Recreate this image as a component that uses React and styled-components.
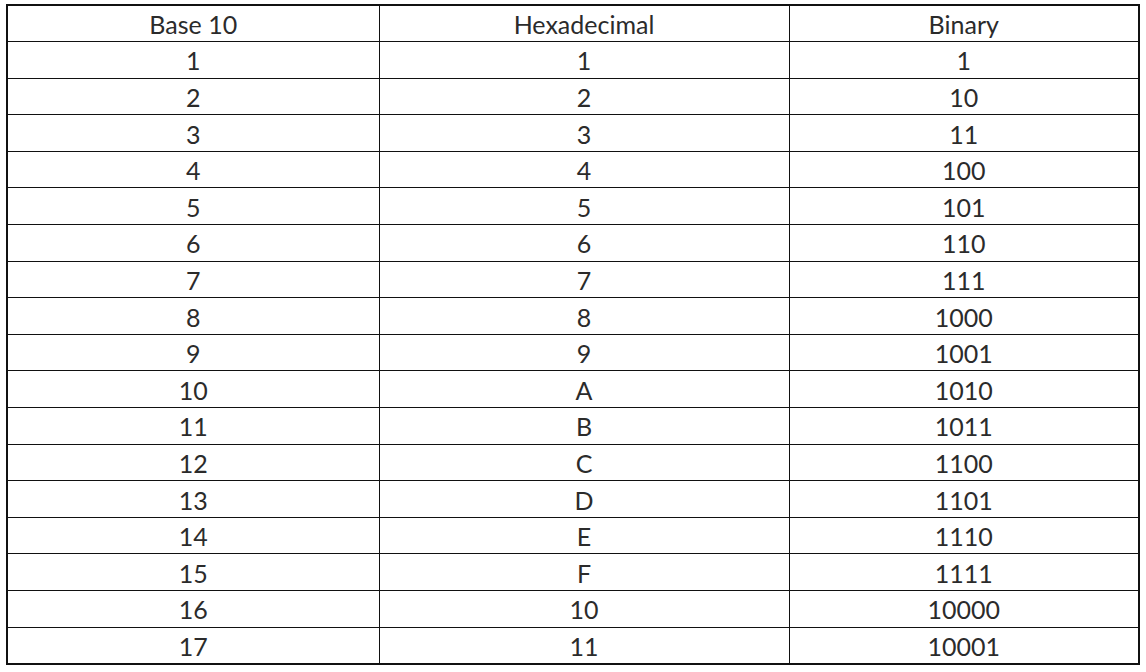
import React from 'react'
import styled, { createGlobalStyle } from 'styled-components';

const GlobalStyle = createGlobalStyle`
  html, body {
    margin: 0;
    padding: 0;
    background: #fff;
  }
  body {
    font-family: Lato, "Open Sans", sans-serif;
  }
`;

const rows = [
  [1, '1', '1'],
  [2, '2', '10'],
  [3, '3', '11'],
  [4, '4', '100'],
  [5, '5', '101'],
  [6, '6', '110'],
  [7, '7', '111'],
  [8, '8', '1000'],
  [9, '9', '1001'],
  [10, 'A', '1010'],
  [11, 'B', '1011'],
  [12, 'C', '1100'],
  [13, 'D', '1101'],
  [14, 'E', '1110'],
  [15, 'F', '1111'],
  [16, '10', '10000'],
  [17, '11', '10001'],
];

const App = () => {
  return (
    <Page>
      <GlobalStyle />
      <Table>
        <colgroup>
          <col style={{ width: 372 }} />
          <col style={{ width: 410 }} />
          <col style={{ width: 350 }} />
        </colgroup>
        <thead>
          <Row>
            <Cell as="th">Base 10</Cell>
            <Cell as="th">Hexadecimal</Cell>
            <Cell as="th">Binary</Cell>
          </Row>
        </thead>
        <tbody>
          {rows.map(([dec, hex, bin]) => (
            <Row key={dec}>
              <Cell>{dec}</Cell>
              <Cell>{hex}</Cell>
              <Cell>{bin}</Cell>
            </Row>
          ))}
        </tbody>
      </Table>
    </Page>
  )
}

const Page = styled.div`
  width: 1146px;
  height: 672px;
  padding: 4px 0 0 6px;
  box-sizing: border-box;
`;

const Table = styled.table`
  width: 1132px;
  table-layout: fixed;
  border-collapse: collapse;
  border: 2.5px solid #111;
  color: #2b2b2b;
`;

const Row = styled.tr`
  height: 36.6px;
`;

const Cell = styled.td`
  border: 1.6px solid #111;
  padding: 2px 0 0 0;
  text-align: center;
  vertical-align: middle;
  font-size: 25px;
  font-weight: 400;
  line-height: 1;
`;

export default App;
